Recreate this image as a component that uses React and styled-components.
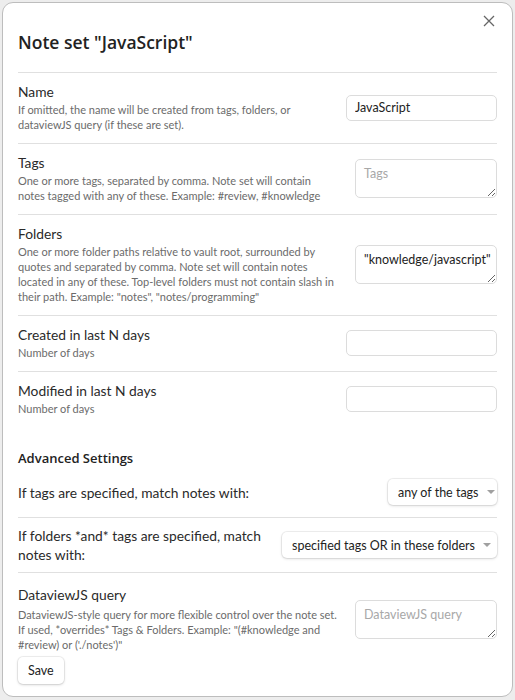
import React from "react";
import styled, { createGlobalStyle } from "styled-components";

const GlobalStyle = createGlobalStyle`
    html, body {
        margin: 0;
        padding: 0;
        background: #ededed;
    }
    body {
        font-family: Lato, "Open Sans", sans-serif;
        color: #222;
    }
`;

const Page = styled.div`
    padding: 2px;
    box-sizing: border-box;
    height: 700px;
`;

const Modal = styled.div`
    position: relative;
    box-sizing: border-box;
    height: 695px;
    background: #fff;
    border: 1px solid #bdbdbd;
    border-radius: 11px;
    padding: 26px 15px 16px 15px;
`;

const CloseButton = styled.button`
    position: absolute;
    top: 6px;
    right: 11px;
    width: 24px;
    height: 24px;
    padding: 0;
    border: none;
    background: transparent;
    color: #666;
    display: flex;
    align-items: center;
    justify-content: center;
    cursor: pointer;
`;

const Title = styled.h2`
    margin: 0;
    padding-bottom: 16px;
    font-family: "Open Sans", Lato, sans-serif;
    font-size: 17.5px;
    font-weight: 600;
    line-height: 27px;
    color: #222;
    border-bottom: 1px solid #e0e0e0;
`;

const Item = styled.div`
    display: flex;
    align-items: center;
    padding: ${(p) => p.$pad || "10px 0 11px"};
    border-top: ${(p) => (p.$first ? "none" : "1px solid #e0e0e0")};
`;

const Info = styled.div`
    flex: 1 1 auto;
    margin-right: 16px;
`;

const Name = styled.div`
    font-size: 13.8px;
    line-height: ${(p) => (p.$lh ? p.$lh : 17)}px;
    color: #2a2a2a;
`;

const Desc = styled.div`
    font-size: 11px;
    line-height: 15px;
    color: #6b6b6b;
    padding-top: ${(p) => p.$gap}px;
`;

const Control = styled.div`
    flex: 0 0 auto;
    display: flex;
    justify-content: flex-end;
`;

const TextInput = styled.input`
    box-sizing: border-box;
    width: 151px;
    height: 26px;
    border: 1px solid #dcdcdc;
    border-radius: 5px;
    padding: 0 8px;
    font-family: inherit;
    font-size: 12.5px;
    color: #222;
    outline: none;
`;

const TextArea = styled.textarea`
    box-sizing: border-box;
    width: 142px;
    height: 39px;
    border: 1px solid #dcdcdc;
    border-radius: 5px;
    padding: 5px 8px;
    font-family: inherit;
    font-size: 12.5px;
    line-height: 17px;
    color: #222;
    outline: none;
    resize: both;
    display: block;
    overflow: hidden;
    white-space: pre;

    &::placeholder {
        color: #a8a8a8;
    }
`;

const Heading = styled.div`
    padding-top: 22px;
    font-family: "Open Sans", Lato, sans-serif;
    font-size: 13px;
    font-weight: 600;
    line-height: 18px;
    color: #222;
`;

const SelectBox = styled.div`
    box-sizing: border-box;
    width: ${(p) => p.$w}px;
    height: 26px;
    display: flex;
    align-items: center;
    justify-content: space-between;
    padding: 0 8px 0 10px;
    border-radius: 5px;
    background: #fff;
    box-shadow: 0 0 0 1px rgba(0, 0, 0, 0.06), 0 1px 3px rgba(0, 0, 0, 0.14);
    font-size: 12.5px;
    white-space: nowrap;
    color: #222;
`;

const Arrow = styled.span`
    width: 0;
    height: 0;
    border-left: 4px solid transparent;
    border-right: 4px solid transparent;
    border-top: 4px solid #a0a0a0;
    margin-left: 8px;
`;

const SaveButton = styled.button`
    margin-top: 1px;
    height: 27px;
    padding: 0 10px;
    border: none;
    border-radius: 5px;
    background: #fff;
    box-shadow: 0 0 0 1px rgba(0, 0, 0, 0.06), 0 1px 3px rgba(0, 0, 0, 0.16);
    font-family: inherit;
    font-size: 12.5px;
    color: #222;
`;

const Setting = ({ name, desc, children, first, pad, lh, gap = 2 }) => (
    <Item $first={first} $pad={pad}>
        <Info>
            <Name $lh={lh}>{name}</Name>
            {desc && <Desc $gap={gap}>{desc}</Desc>}
        </Info>
        <Control>{children}</Control>
    </Item>
);

const Select = ({ value, width }) => (
    <SelectBox $w={width}>
        <span>{value}</span>
        <Arrow />
    </SelectBox>
);

export default function App() {
    return (
        <>
            <GlobalStyle />
            <Page>
                <Modal>
                    <CloseButton aria-label="Close">
                        <svg width="12" height="12" viewBox="0 0 12 12">
                            <path d="M1 1 L11 11 M11 1 L1 11" stroke="currentColor" strokeWidth="1.3" fill="none" />
                        </svg>
                    </CloseButton>
                    <Title>Note set "JavaScript"</Title>

                    <Setting
                        first
                        name="Name"
                        desc="If omitted, the name will be created from tags, folders, or dataviewJS query (if these are set)."
                    >
                        <TextInput defaultValue="JavaScript" />
                    </Setting>

                    <Setting
                        name="Tags"
                        desc="One or more tags, separated by comma. Note set will contain notes tagged with any of these. Example: #review, #knowledge"
                    >
                        <TextArea placeholder="Tags" />
                    </Setting>

                    <Setting
                        name="Folders"
                        desc={'One or more folder paths relative to vault root, surrounded by quotes and separated by comma. Note set will contain notes located in any of these. Top-level folders must not contain slash in their path. Example: "notes", "notes/programming"'}
                    >
                        <TextArea wrap="off" defaultValue={'"knowledge/javascript"'} />
                    </Setting>

                    <Setting name="Created in last N days" desc="Number of days">
                        <TextInput />
                    </Setting>

                    <Setting name="Modified in last N days" desc="Number of days">
                        <TextInput />
                    </Setting>

                    <Heading>Advanced Settings</Heading>

                    <Setting first pad="12px 0" name="If tags are specified, match notes with:">
                        <Select value="any of the tags" width={109} />
                    </Setting>

                    <Setting pad="8px 0" lh={19} name="If folders *and* tags are specified, match notes with:">
                        <Select value="specified tags OR in these folders" width={215} />
                    </Setting>

                    <Setting
                        pad="13px 0 4px"
                        gap={4}
                        name="DataviewJS query"
                        desc={"DataviewJS-style query for more flexible control over the note set. If used, *overrides* Tags & Folders. Example: \"(#knowledge and #review) or ('./notes')\""}
                    >
                        <TextArea placeholder="DataviewJS query" />
                    </Setting>

                    <SaveButton>Save</SaveButton>
                </Modal>
            </Page>
        </>
    );
}
